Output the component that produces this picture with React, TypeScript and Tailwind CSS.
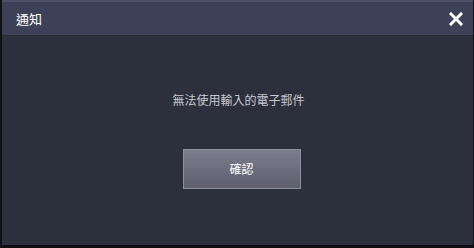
import { useState } from 'react';

function App() {
  const [open, setOpen] = useState(true);

  return (
    <div
      className="w-[474px] h-[248px] bg-[#101115] pl-[2px] pb-[3px] pr-[1px]"
      style={{ fontFamily: '"Noto Sans CJK TC", "Noto Sans", sans-serif' }}
    >
      {open && (
        <div className="flex flex-col h-full bg-[#2c2f3c]">
          {/* 상단바 */}
          <div className="flex items-center justify-between h-[36px] pl-[14px] pr-[10px] bg-[#3d4158] border-t-2 border-[#4b5069] border-b border-b-[#262834]">
            <span className="text-[13px] text-white leading-none">通知</span>
            <button className="text-white" onClick={() => setOpen(false)}>
              <svg width="14" height="14" viewBox="0 0 14 14">
                <path d="M2 2 L12 12 M12 2 L2 12" stroke="white" strokeWidth="3" strokeLinecap="square" />
              </svg>
            </button>
          </div>
          {/* 내용 */}
          <div className="flex flex-col items-center flex-1">
            <p className="mt-[58px] ml-[2px] text-[12px] text-[#c9cad0] leading-none">無法使用輸入的電子郵件</p>
            <button className="mt-[43px] ml-[8px] w-[118px] h-[40px] text-[12px] text-white bg-gradient-to-b from-[#7c7e8e] to-[#5d5f6d] border border-[#8c8e9c]">
              確認
            </button>
          </div>
        </div>
      )}
    </div>
  );
}

export default App;
